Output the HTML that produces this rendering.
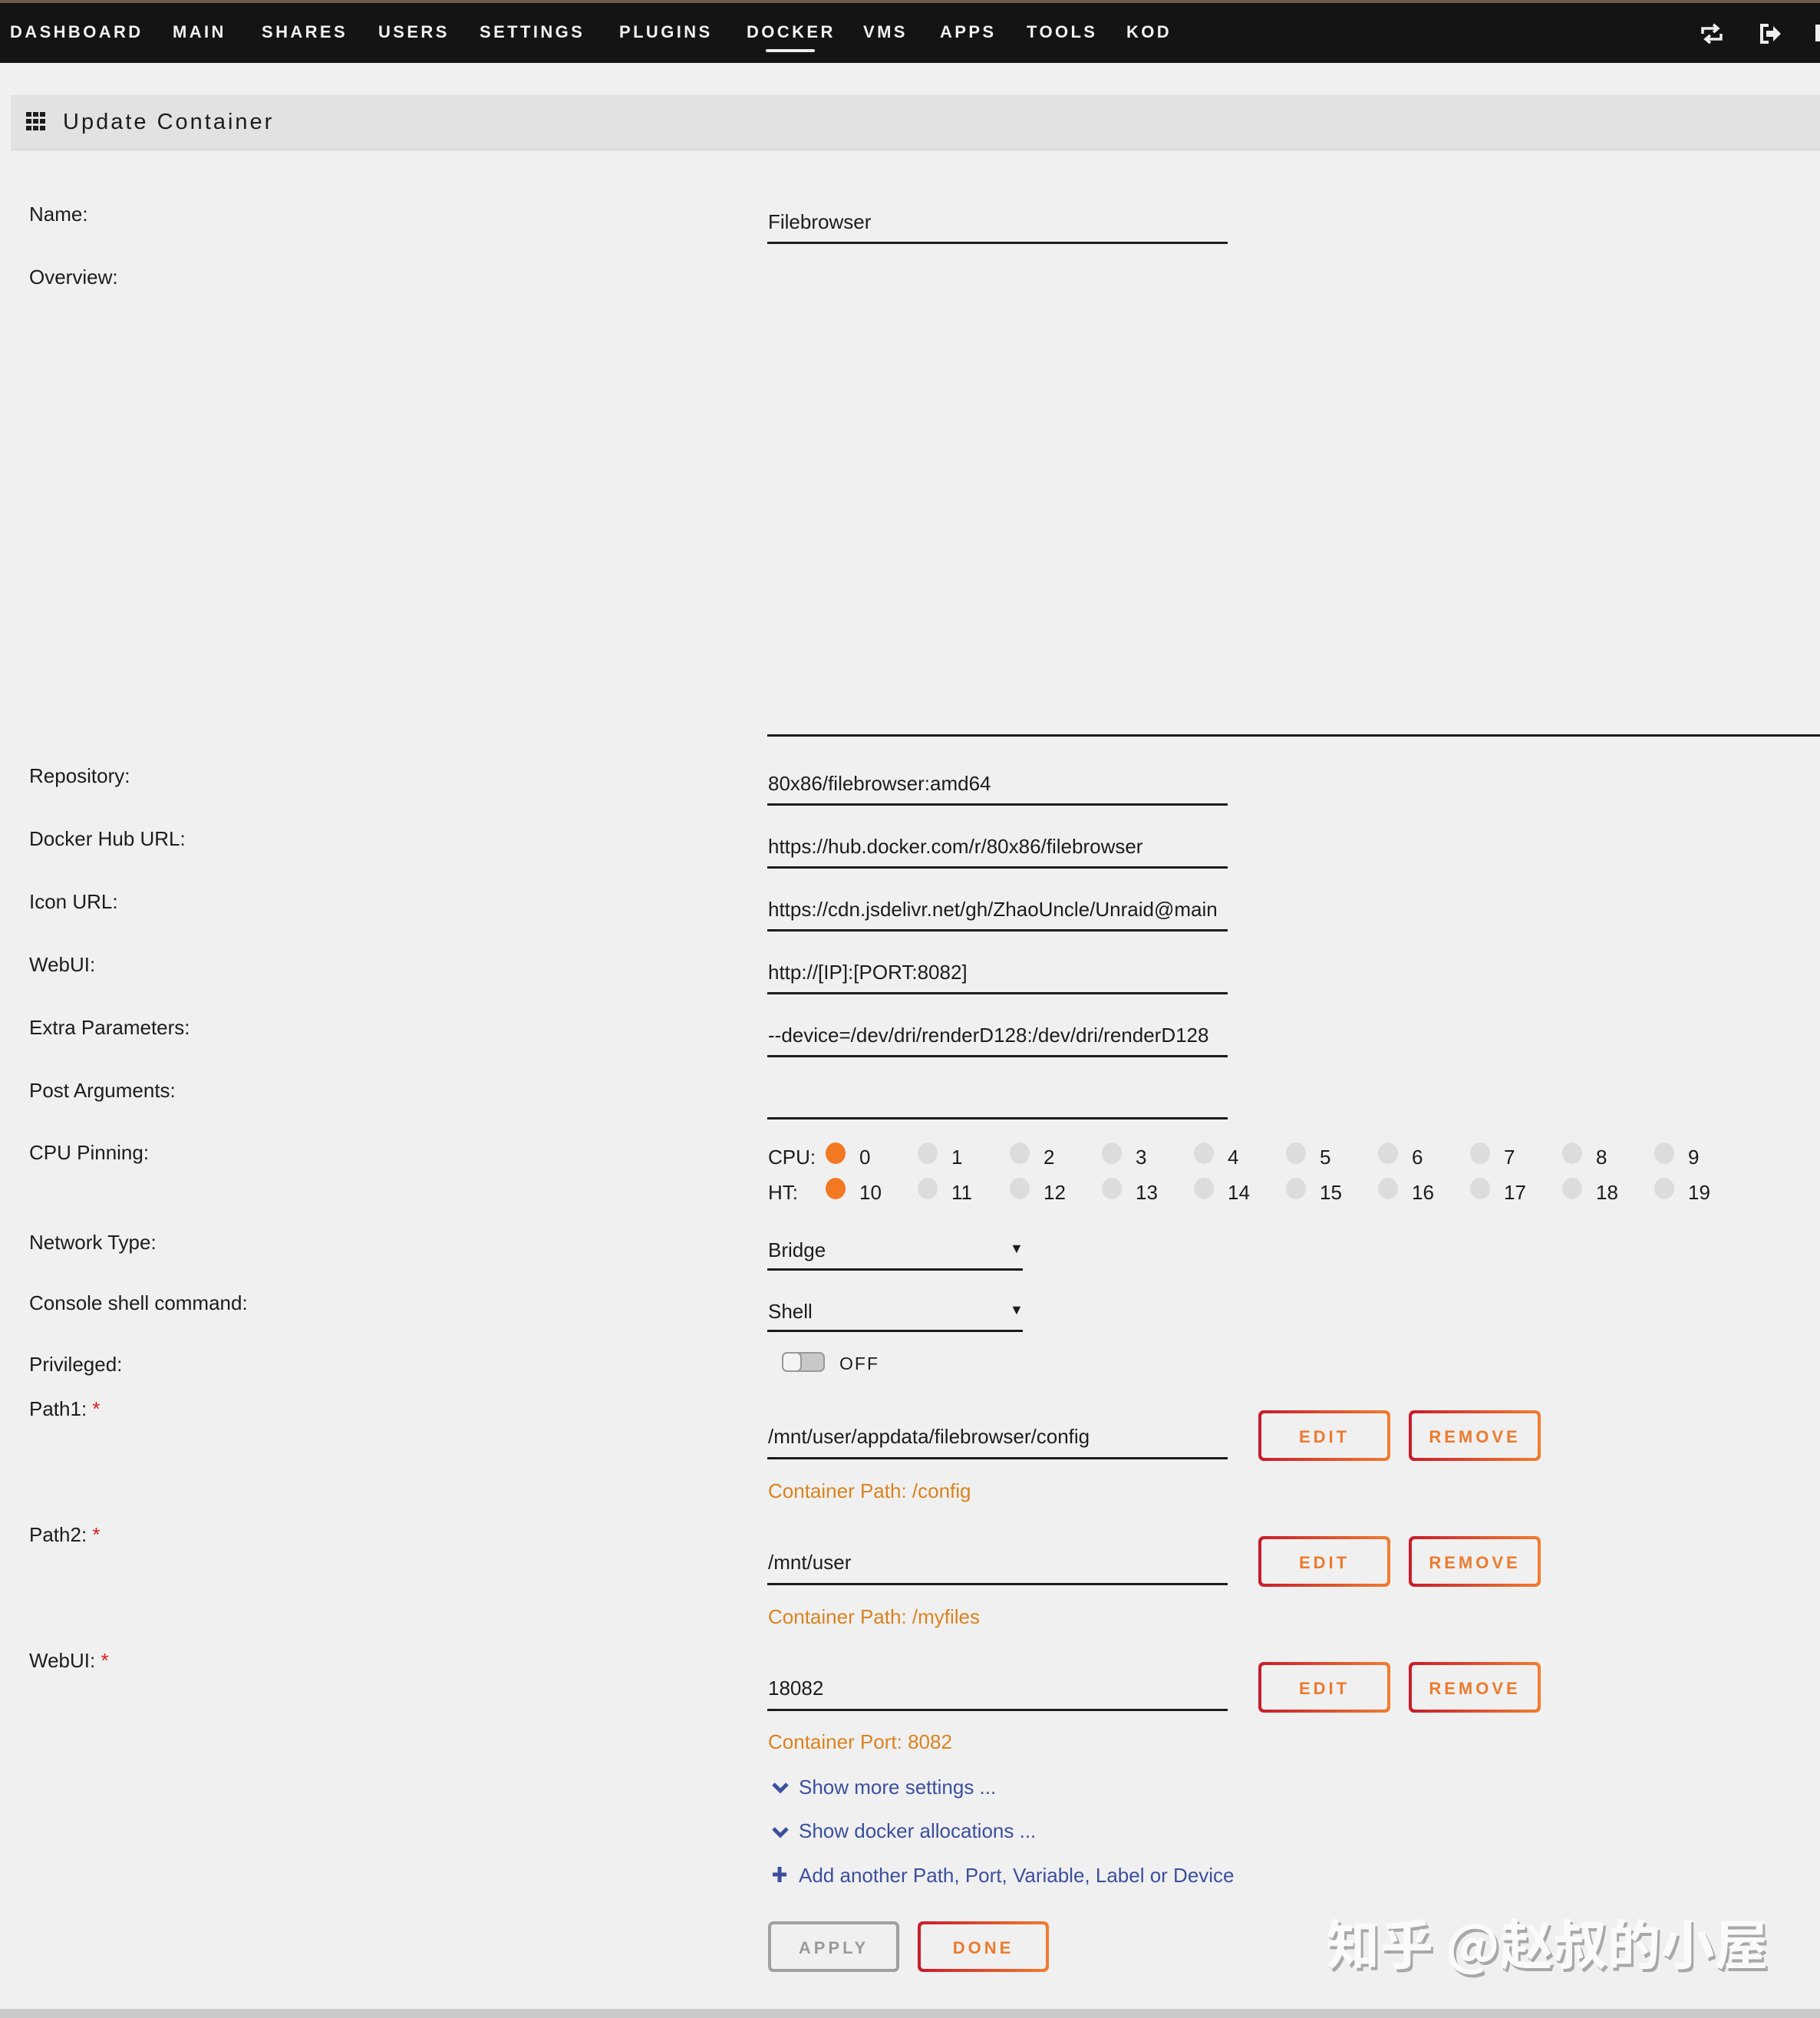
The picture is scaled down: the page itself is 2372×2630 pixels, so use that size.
<!DOCTYPE html>
<html><head><meta charset="utf-8"><style>
*{margin:0;padding:0;box-sizing:border-box}
body{width:2372px;height:2630px;background:#f0f0f0;position:relative;overflow:hidden;font-family:"Liberation Sans","DejaVu Sans",sans-serif;color:#1c1c1c}
.a{position:absolute;white-space:nowrap}
.top{left:0;top:0;width:2372px;height:4px;background:#6b5a45}
.nav{left:0;top:4px;width:2372px;height:78px;background:#141414}
.nl{top:29px;font-size:22px;font-weight:bold;color:#f2f2f2;letter-spacing:3.4px}
.hdr{left:14px;top:124px;width:2358px;height:72px;background:#e2e2e2;border-bottom:2px solid #d8d8d8}
.lab{left:38px;font-size:26px;line-height:34px}
.val{left:1001px;font-size:26px;line-height:34px}
.ul{left:1000px;width:600px;height:3px;background:#1c1c1c}
.star{color:#d21f1f}
.btn{position:absolute;border-radius:7px;background:linear-gradient(90deg,#c81c2c,#f07e30)}
.btn span{position:absolute;left:4px;top:4px;right:4px;bottom:4px;background:#f0f0f0;border-radius:4px;display:flex;align-items:center;justify-content:center;font-size:22px;font-weight:bold;color:#ec7a2d;letter-spacing:4px;padding-top:3px}
.or{color:#d9831f}
.bl{color:#3b4f9e;font-size:26px;line-height:34px}
.dot{position:absolute;width:26px;height:28px;border-radius:50%;background:#dcdcdc}
.dot.on{background:#f37822}
.num{position:absolute;font-size:26px;line-height:34px}
</style></head><body>
<div class="a top"></div>
<div class="a nav"></div>
<div class="a nl" style="left:13px">DASHBOARD</div>
<div class="a nl" style="left:225px">MAIN</div>
<div class="a nl" style="left:341px">SHARES</div>
<div class="a nl" style="left:493px">USERS</div>
<div class="a nl" style="left:625px">SETTINGS</div>
<div class="a nl" style="left:807px">PLUGINS</div>
<div class="a nl" style="left:973px">DOCKER</div>
<div class="a" style="left:998px;top:64px;width:64px;height:4px;background:#eee;border-radius:2px"></div>
<div class="a nl" style="left:1125px">VMS</div>
<div class="a nl" style="left:1225px">APPS</div>
<div class="a nl" style="left:1338px">TOOLS</div>
<div class="a nl" style="left:1468px">KOD</div>
<svg class="a" style="left:2216px;top:30px" width="30" height="28" viewBox="0 0 30 28"><path d="M3 14V7h18M17 2l6 5-6 5M27 14v7H9M13 16l-6 5 6 5" stroke="#eee" stroke-width="3.5" fill="none"/></svg>
<svg class="a" style="left:2293px;top:30px" width="30" height="28" viewBox="0 0 30 28"><path d="M12 3H3v22h9" stroke="#eee" stroke-width="4" fill="none"/><path d="M9 10h9V4l10 10-10 10v-6H9z" fill="#eee"/></svg>
<div class="a" style="left:2366px;top:32px;width:6px;height:22px;background:#eee"></div>

<div class="a hdr"></div>
<svg class="a" style="left:34px;top:146px" width="26" height="24" viewBox="0 0 26 24"><g fill="#1c1c1c"><rect x="0" y="0" width="7" height="6"/><rect x="9" y="0" width="7" height="6"/><rect x="18" y="0" width="7" height="6"/><rect x="0" y="9" width="7" height="6"/><rect x="9" y="9" width="7" height="6"/><rect x="18" y="9" width="7" height="6"/><rect x="0" y="18" width="7" height="6"/><rect x="9" y="18" width="7" height="6"/><rect x="18" y="18" width="7" height="6"/></g></svg>
<div class="a" style="left:82px;top:143px;font-size:29px;letter-spacing:3px;color:#1c1c1c">Update Container</div>

<div class="a lab" style="top:262px">Name:</div>
<div class="a val" style="top:272px">Filebrowser</div>
<div class="a ul" style="top:315px"></div>
<div class="a lab" style="top:344px">Overview:</div>
<div class="a" style="left:1000px;top:957px;width:1372px;height:3px;background:#1c1c1c"></div>

<div class="a lab" style="top:994px">Repository:</div>
<div class="a val" style="top:1004px">80x86/filebrowser:amd64</div>
<div class="a ul" style="top:1047px"></div>
<div class="a lab" style="top:1076px">Docker Hub URL:</div>
<div class="a val" style="top:1086px">https://hub.docker.com/r/80x86/filebrowser</div>
<div class="a ul" style="top:1129px"></div>
<div class="a lab" style="top:1158px">Icon URL:</div>
<div class="a val" style="top:1168px;width:600px;overflow:hidden">https://cdn.jsdelivr.net/gh/ZhaoUncle/Unraid@main</div>
<div class="a ul" style="top:1211px"></div>
<div class="a lab" style="top:1240px">WebUI:</div>
<div class="a val" style="top:1250px">http://[IP]:[PORT:8082]</div>
<div class="a ul" style="top:1293px"></div>
<div class="a lab" style="top:1322px">Extra Parameters:</div>
<div class="a val" style="top:1332px;width:600px;overflow:hidden">--device=/dev/dri/renderD128:/dev/dri/renderD128</div>
<div class="a ul" style="top:1375px"></div>
<div class="a lab" style="top:1404px">Post Arguments:</div>
<div class="a ul" style="top:1456px"></div>
<div class="a lab" style="top:1485px">CPU Pinning:</div>
<div class="a val" style="top:1491px">CPU:</div>
<div class="a val" style="top:1537px">HT:</div>
<div class="dot on" style="left:1076px;top:1489px"></div>
<div class="num" style="left:1120px;top:1491px">0</div>
<div class="dot" style="left:1196px;top:1489px"></div><div class="num" style="left:1240px;top:1491px">1</div>
<div class="dot" style="left:1316px;top:1489px"></div><div class="num" style="left:1360px;top:1491px">2</div>
<div class="dot" style="left:1436px;top:1489px"></div><div class="num" style="left:1480px;top:1491px">3</div>
<div class="dot" style="left:1556px;top:1489px"></div><div class="num" style="left:1600px;top:1491px">4</div>
<div class="dot" style="left:1676px;top:1489px"></div><div class="num" style="left:1720px;top:1491px">5</div>
<div class="dot" style="left:1796px;top:1489px"></div><div class="num" style="left:1840px;top:1491px">6</div>
<div class="dot" style="left:1916px;top:1489px"></div><div class="num" style="left:1960px;top:1491px">7</div>
<div class="dot" style="left:2036px;top:1489px"></div><div class="num" style="left:2080px;top:1491px">8</div>
<div class="dot" style="left:2156px;top:1489px"></div><div class="num" style="left:2200px;top:1491px">9</div>
<div class="dot on" style="left:1076px;top:1535px"></div><div class="num" style="left:1120px;top:1537px">10</div>
<div class="dot" style="left:1196px;top:1535px"></div><div class="num" style="left:1240px;top:1537px">11</div>
<div class="dot" style="left:1316px;top:1535px"></div><div class="num" style="left:1360px;top:1537px">12</div>
<div class="dot" style="left:1436px;top:1535px"></div><div class="num" style="left:1480px;top:1537px">13</div>
<div class="dot" style="left:1556px;top:1535px"></div><div class="num" style="left:1600px;top:1537px">14</div>
<div class="dot" style="left:1676px;top:1535px"></div><div class="num" style="left:1720px;top:1537px">15</div>
<div class="dot" style="left:1796px;top:1535px"></div><div class="num" style="left:1840px;top:1537px">16</div>
<div class="dot" style="left:1916px;top:1535px"></div><div class="num" style="left:1960px;top:1537px">17</div>
<div class="dot" style="left:2036px;top:1535px"></div><div class="num" style="left:2080px;top:1537px">18</div>
<div class="dot" style="left:2156px;top:1535px"></div><div class="num" style="left:2200px;top:1537px">19</div>

<div class="a lab" style="top:1602px">Network Type:</div>
<div class="a val" style="top:1612px">Bridge</div>
<div class="a" style="left:1316px;top:1617px;font-size:18px">▼</div>
<div class="a" style="left:1000px;top:1653px;width:333px;height:3px;background:#1c1c1c"></div>
<div class="a lab" style="top:1681px">Console shell command:</div>
<div class="a val" style="top:1692px">Shell</div>
<div class="a" style="left:1316px;top:1697px;font-size:18px">▼</div>
<div class="a" style="left:1000px;top:1733px;width:333px;height:3px;background:#1c1c1c"></div>
<div class="a lab" style="top:1761px">Privileged:</div>
<div class="a" style="left:1019px;top:1762px;width:56px;height:26px;border:2px solid #999;border-radius:7px;background:#c8c8c8"></div>
<div class="a" style="left:1019px;top:1762px;width:26px;height:26px;border:2px solid #999;border-radius:7px;background:#f4f4f4"></div>
<div class="a" style="left:1094px;top:1764px;font-size:23px;letter-spacing:2px">OFF</div>

<div class="a lab" style="top:1819px">Path1: <span class="star">*</span></div>
<div class="a val" style="top:1855px">/mnt/user/appdata/filebrowser/config</div>
<div class="a ul" style="top:1899px"></div>
<div class="btn" style="left:1640px;top:1838px;width:172px;height:66px"><span>EDIT</span></div>
<div class="btn" style="left:1836px;top:1838px;width:172px;height:66px"><span>REMOVE</span></div>
<div class="a val or" style="top:1926px">Container Path: /config</div>

<div class="a lab" style="top:1983px">Path2: <span class="star">*</span></div>
<div class="a val" style="top:2019px">/mnt/user</div>
<div class="a ul" style="top:2063px"></div>
<div class="btn" style="left:1640px;top:2002px;width:172px;height:66px"><span>EDIT</span></div>
<div class="btn" style="left:1836px;top:2002px;width:172px;height:66px"><span>REMOVE</span></div>
<div class="a val or" style="top:2090px">Container Path: /myfiles</div>

<div class="a lab" style="top:2147px">WebUI: <span class="star">*</span></div>
<div class="a val" style="top:2183px">18082</div>
<div class="a ul" style="top:2227px"></div>
<div class="btn" style="left:1640px;top:2166px;width:172px;height:66px"><span>EDIT</span></div>
<div class="btn" style="left:1836px;top:2166px;width:172px;height:66px"><span>REMOVE</span></div>
<div class="a val or" style="top:2253px">Container Port: 8082</div>

<svg class="a" style="left:1005px;top:2321px" width="24" height="18" viewBox="0 0 24 18"><path d="M3 4l9 9 9-9" stroke="#3b4f9e" stroke-width="5" fill="none"/></svg>
<div class="a bl" style="left:1041px;top:2312px">Show more settings ...</div>
<svg class="a" style="left:1005px;top:2379px" width="24" height="18" viewBox="0 0 24 18"><path d="M3 4l9 9 9-9" stroke="#3b4f9e" stroke-width="5" fill="none"/></svg>
<div class="a bl" style="left:1041px;top:2369px">Show docker allocations ...</div>
<svg class="a" style="left:1006px;top:2432px" width="20" height="22" viewBox="0 0 20 22"><path d="M10 1v20M1 11h18" stroke="#3b4f9e" stroke-width="5"/></svg>
<div class="a bl" style="left:1041px;top:2427px">Add another Path, Port, Variable, Label or Device</div>

<div class="a" style="left:1001px;top:2504px;width:171px;height:66px;border:4px solid #a0a0a0;border-radius:7px;display:flex;align-items:center;justify-content:center;font-size:22px;font-weight:bold;color:#9a9a9a;letter-spacing:4px;padding-top:3px">APPLY</div>
<div class="btn" style="left:1196px;top:2504px;width:171px;height:66px"><span>DONE</span></div>

<div class="a" style="left:1728px;top:2490px;font-family:'Noto Sans CJK SC',sans-serif;font-size:70px;font-weight:bold;color:#fafafa;text-shadow:3px 4px 0 #a8a8a8;line-height:82px">知乎 @赵叔的小屋</div>

<div class="a" style="left:0;top:2618px;width:2372px;height:12px;background:#c9c9c9"></div>
</body></html>
